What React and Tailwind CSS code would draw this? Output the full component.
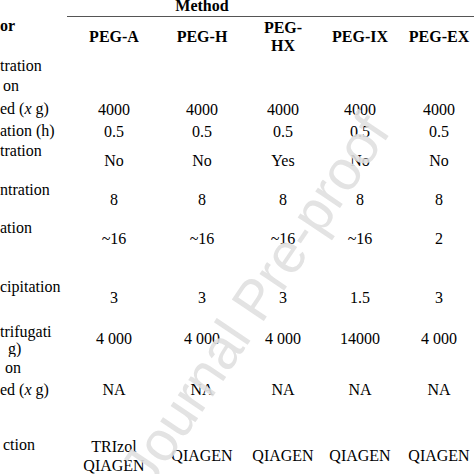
import React from "react";

const COLS = "grid grid-cols-[70px_88px_88px_74px_80px_78px]";

const Label = ({ lines, lead = "leading-[20px]" }) => (
  <div className={`whitespace-nowrap overflow-hidden ${lead}`}>
    {lines.map(([text, cls], i) => (
      <div key={i} className={cls}>
        {text}
      </div>
    ))}
  </div>
);

const Values = ({ vals, pt = "" }) =>
  vals.map((v, i) => (
    <div key={i} className={`text-center whitespace-nowrap leading-[20px] ${pt}`}>
      {v}
    </div>
  ));

const XG = () => (
  <>
    ed (<i>x</i> g)
  </>
);

export default function App() {
  return (
    <div className="relative w-[474px] h-[474px] overflow-hidden bg-white text-black text-[16px] font-['Liberation_Serif','Times_New_Roman',serif]">
      {/* header */}
      <div className={`${COLS} h-[16px] font-bold leading-[20px]`}>
        <div />
        <div />
        <div className="text-center -mt-[4px]">Method</div>
      </div>
      <div className="ml-[67px] border-t border-[#555]" />
      <div className={`${COLS} h-[38px] font-bold leading-[18px]`}>
        <div className="whitespace-nowrap">or</div>
        <div className="text-center pt-[11px]">PEG-A</div>
        <div className="text-center pt-[11px]">PEG-H</div>
        <div className="text-center pt-[2px]">
          PEG-
          <br />
          HX
        </div>
        <div className="text-center pt-[11px]">PEG-IX</div>
        <div className="text-center pt-[11px]">PEG-EX</div>
      </div>

      {/* body */}
      <div className={`${COLS} h-[43px] mt-[1px]`}>
        <Label lines={[["tration", ""], ["on", "pl-[3px]"]]} />
      </div>
      <div className={`${COLS} h-[22px]`}>
        <Label lines={[[<XG key="x" />, ""]]} />
        <Values vals={["4000", "4000", "4000", "4000", "4000"]} pt="pt-[1px]" />
      </div>
      <div className={`${COLS} h-[20px]`}>
        <Label lines={[["ation (h)", ""]]} />
        <Values vals={["0.5", "0.5", "0.5", "0.5", "0.5"]} pt="pt-[1px]" />
      </div>
      <div className={`${COLS} h-[39px]`}>
        <Label lines={[["tration", ""]]} />
        <Values vals={["No", "No", "Yes", "No", "No"]} pt="pt-[10px]" />
      </div>
      <div className={`${COLS} h-[38px]`}>
        <Label lines={[["ntration", ""]]} />
        <Values vals={["8", "8", "8", "8", "8"]} pt="pt-[10px]" />
      </div>
      <div className={`${COLS} h-[59px]`}>
        <Label lines={[["ation", ""]]} />
        <Values vals={["~16", "~16", "~16", "~16", "2"]} pt="pt-[11px]" />
      </div>
      <div className={`${COLS} h-[46px]`}>
        <Label lines={[["cipitation", ""]]} />
        <Values vals={["3", "3", "3", "1.5", "3"]} pt="pt-[11px]" />
      </div>
      <div className={`${COLS} h-[34px]`}>
        <Label
          lead="leading-[17px]"
          lines={[["trifugati", ""], ["g)", "pl-[8px]"]]}
        />
        <Values vals={["4 000", "4 000", "4 000", "14000", "4 000"]} pt="pt-[6px]" />
      </div>
      <div className={`${COLS} h-[78px]`}>
        <Label
          lead="leading-[22px]"
          lines={[["on", "pl-[5px]"], [<XG key="x" />, ""]]}
        />
        <Values vals={["NA", "NA", "NA", "NA", "NA"]} pt="pt-[23px]" />
      </div>
      <div className={`${COLS} h-[39px]`}>
        <Label lines={[["ction", "pl-[3px]"]]} />
        <div className="text-center whitespace-nowrap leading-[19px] pt-[2px]">
          TRIzol
          <br />
          QIAGEN
        </div>
        <Values vals={["QIAGEN", "QIAGEN", "QIAGEN", "QIAGEN"]} pt="pt-[11px]" />
      </div>

      {/* watermark */}
      <div className="absolute left-[255px] top-[300px] -translate-x-1/2 -translate-y-1/2 rotate-[-56deg] whitespace-nowrap text-[56px] leading-none text-[#e0e0e0] opacity-90 font-['Liberation_Sans',Arial,sans-serif] pointer-events-none">
        Journal Pre-proof
      </div>
    </div>
  );
}
